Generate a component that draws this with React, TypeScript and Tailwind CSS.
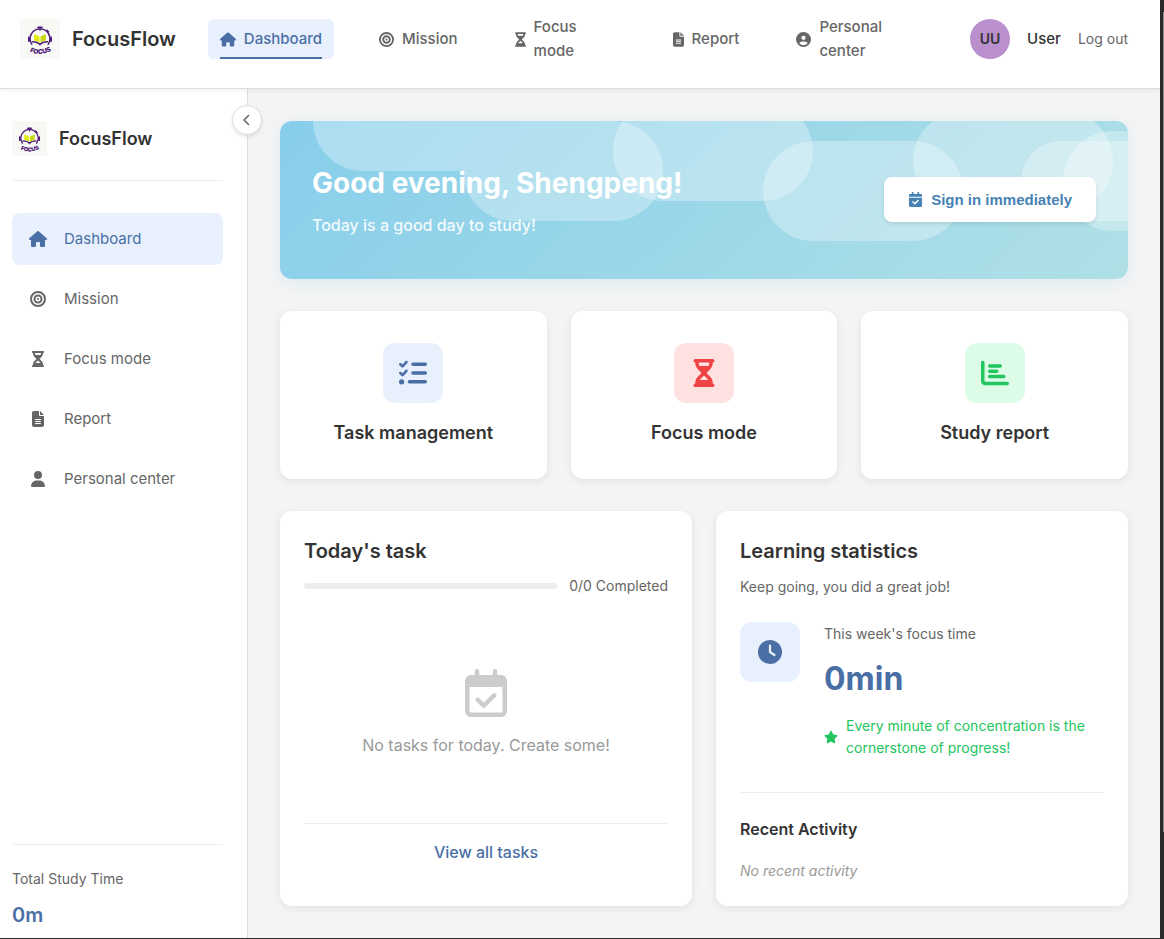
import React from "react";
import {
  FaHouse, FaBullseye, FaHourglassHalf, FaFileLines, FaUser, FaCircleUser, FaCalendarCheck,
  FaListCheck, FaChartBar, FaClock, FaStar, FaChevronLeft, FaRegCalendarCheck,
} from "react-icons/fa6";
import type { IconType } from "react-icons";

function Logo({ className, arcId }: { className: string; arcId: string }) {
  return (
    <svg viewBox="0 0 40 40" className={className} aria-hidden="true">
      <rect width="40" height="40" fill="#f8f8f4" />
      <g fill="none" stroke="#4f1b78" strokeLinecap="round">
        <path d="M18 8.3h4M20 8.5v2.6" strokeWidth="1.6" />
        <path d="M27 11.4l1.6 1.6" strokeWidth="1.6" />
        <path d="M11.8 25.4a10 10 0 1 1 16.4 0" strokeWidth="1.5" />
        <path d="M9 18.5v3.4M31 18.5v3.4" strokeWidth="2" />
        <path d="M12.5 22.8c3.2 0 5.8.8 7.5 2.8 1.7-2 4.3-2.8 7.5-2.8" strokeWidth="1.5" />
      </g>
      <path d="M14 15.6c2.5.2 4.3 1 5.5 2.4v6c-1.4-1.4-3.2-2.2-5.500-2.400z" fill="#e3ec10" />
      <path d="M26 15.6c-2.500.2-4.300 1-5.500 2.400v6c1.400-1.400 3.200-2.200 5.500-2.400z" fill="#c8d812" />
      <path id={arcId} d="M7 31Q20 39.500 34 30" fill="none" />
      <text fill="#4f1b78" fontSize="6.5" fontWeight="900" textAnchor="middle">
        <textPath href={`#${arcId}`} startOffset="50%">FOCUS</textPath>
      </text>
    </svg>
  );
}

type NavEntry = { label: string; icon: IconType; size: string; active?: boolean };

const topNav: NavEntry[] = [
  { label: "Dashboard", icon: FaHouse, size: "h-[15px] w-4", active: true },
  { label: "Mission", icon: FaBullseye, size: "h-[15px] w-[15px]" },
  { label: "Focus mode", icon: FaHourglassHalf, size: "h-[15px] w-[11px]" },
  { label: "Report", icon: FaFileLines, size: "h-[15px] w-[11px]" },
  { label: "Personal center", icon: FaCircleUser, size: "h-[15px] w-[15px]" },
];

const sideNav: NavEntry[] = [
  { label: "Dashboard", icon: FaHouse, size: "h-4 w-[18px]", active: true },
  { label: "Mission", icon: FaBullseye, size: "size-4" },
  { label: "Focus mode", icon: FaHourglassHalf, size: "size-4" },
  { label: "Report", icon: FaFileLines, size: "size-4" },
  { label: "Personal center", icon: FaUser, size: "size-4" },
];

function Header() {
  return (
    <header className="relative z-10 flex items-center border-b border-[#dddddd] bg-white pt-[7px] pr-8 pb-[17px] pl-5 shadow-[0_2px_4px_rgba(0,0,0,0.05)]">
      <a href="#" className="flex shrink-0 items-center gap-3 text-xl font-semibold text-[#333333]">
        <Logo className="size-10" arcId="header-logo-arc" />
        FocusFlow
      </a>
      <nav className="ml-8 flex items-center gap-[33px] text-[15px] leading-6 font-medium">
        {topNav.map(({ label, icon: Icon, size, active }) => (
          <a
            key={label}
            href="#"
            className={
              active
                ? "relative flex items-center gap-2 rounded-md bg-[#e8f0fe] px-3 py-2 text-[#4a6fa5] after:absolute after:inset-x-3 after:bottom-0 after:h-0.5 after:bg-[#4a6fa5]"
                : "flex items-center gap-2 px-3 py-2 text-[#666666]"
            }
          >
            <Icon className={`${size} shrink-0`} />
            <span className="max-w-[82px]">{label}</span>
          </a>
        ))}
      </nav>
      <div className="ml-auto flex shrink-0 items-center gap-[17px]">
        <div className="flex size-10 items-center justify-center rounded-full bg-[#ba8fce] text-sm font-semibold text-[#333333]">UU</div>
        <span className="text-[15px] font-medium text-[#333333]">User</span>
        <button type="button" className="text-sm text-[#666666]">Log out</button>
      </div>
    </header>
  );
}

function Sidebar() {
  return (
    <aside className="relative flex w-[248px] shrink-0 flex-col border-r border-[#dddddd] bg-white pt-8 pr-6 pb-[7px] pl-3">
      <button
        type="button"
        aria-label="Collapse sidebar"
        className="absolute top-4 -right-[15px] flex size-[30px] items-center justify-center rounded-full border border-[#dddddd] bg-white text-[#666666] shadow-[0_2px_4px_rgba(0,0,0,0.1)]"
      >
        <FaChevronLeft className="size-3" />
      </button>
      <div className="flex items-center gap-3 border-b border-[#eeeeee] pb-6 text-lg font-semibold text-[#333333]">
        <Logo className="size-[35px]" arcId="sidebar-logo-arc" />
        FocusFlow
      </div>
      <nav className="mt-8 flex flex-col gap-2 text-[15px] leading-5">
        {sideNav.map(({ label, icon: Icon, size, active }) => (
          <a
            key={label}
            href="#"
            className={
              active
                ? "flex items-center gap-4 rounded-lg bg-[#e8f0fe] p-4 text-[#4a6fa5]"
                : "flex items-center gap-4 rounded-lg p-4 text-[#666666]"
            }
          >
            <span className="flex w-5 justify-center"><Icon className={size} /></span>
            {label}
          </a>
        ))}
      </nav>
      <div className="mt-auto border-t border-[#eeeeee] pt-6">
        <p className="text-sm text-[#666666]">Total Study Time</p>
        <p className="mt-2.5 text-xl leading-8 font-semibold text-[#4a6fa5]">0m</p>
      </div>
    </aside>
  );
}

function Banner() {
  return (
    <section className="relative flex items-center justify-between overflow-hidden rounded-xl bg-[linear-gradient(135deg,#87ceeb,#b0e0e6)] px-8 pt-[39px] pb-[41px] shadow-[0_4px_16px_rgba(135,206,235,0.2)]">
      <div className="absolute -top-[50px] left-[33px] h-[100px] w-[200px] rounded-full bg-white/30 shadow-[150px_50px_rgba(255,255,255,0.3),300px_30px_rgba(255,255,255,0.3),450px_70px_rgba(255,255,255,0.3),600px_40px_rgba(255,255,255,0.3),750px_60px_rgba(255,255,255,0.3)]" />
      <div className="absolute top-5 -right-[43px] h-20 w-[150px] rounded-full bg-white/30" />
      <div className="relative text-white">
        <h1 className="text-[28px] leading-[46px] font-bold">Good evening, Shengpeng!</h1>
        <p className="mt-1.5 text-base leading-[26px] font-medium opacity-90">Today is a good day to study!</p>
      </div>
      <button
        type="button"
        className="relative flex items-center gap-2 rounded-lg bg-white px-6 py-3 font-['Liberation_Sans',Arial,sans-serif] text-[15px] leading-[21px] font-bold text-[#4682b4] shadow-[0_2px_4px_rgba(0,0,0,0.1)]"
      >
        <FaCalendarCheck className="size-[15px]" />
        Sign in immediately
      </button>
    </section>
  );
}

const card = "rounded-xl bg-white shadow-[0_2px_8px_rgba(0,0,0,0.08)]";

const shortcuts = [
  { label: "Task management", icon: FaListCheck, tone: "bg-[#e8f0fe] text-[#4a6fa5]" },
  { label: "Focus mode", icon: FaHourglassHalf, tone: "bg-[#fee2e2] text-[#ef4444]" },
  { label: "Study report", icon: FaChartBar, tone: "bg-[#dcfce7] text-[#22c55e]" },
];

function TodayCard() {
  return (
    <section className={`${card} flex flex-col p-6`}>
      <h2 className="text-xl leading-8 font-semibold">Today's task</h2>
      <div className="mt-2 flex items-center gap-3">
        <div className="h-1.5 flex-1 rounded-full bg-[#eeeeee]" role="progressbar" aria-label="Tasks completed" aria-valuenow={0} />
        <span className="text-sm leading-[22px] text-[#666666]">0/0 Completed</span>
      </div>
      <div className="flex flex-1 flex-col items-center justify-center gap-4 pt-[5px] text-[#999999]">
        <FaRegCalendarCheck className="size-12 text-[#cccccc]" />
        <p className="text-base leading-6">No tasks for today. Create some!</p>
      </div>
      <div className="border-t border-[#eeeeee] pt-4 pb-[18px] text-center">
        <a href="#" className="text-base leading-6 font-medium text-[#4a6fa5]">View all tasks</a>
      </div>
    </section>
  );
}

function StatsCard() {
  return (
    <section className={`${card} p-6`}>
      <h2 className="text-xl leading-8 font-semibold">Learning statistics</h2>
      <p className="mt-2 text-sm leading-6 text-[#666666]">Keep going, you did a great job!</p>
      <div className="mt-[23px] flex items-start gap-6 border-b border-[#eeeeee] pb-[33px]">
        <div className="flex size-15 shrink-0 items-center justify-center rounded-xl bg-[#e8f0fe] text-[#4a6fa5]">
          <FaClock className="size-6" />
        </div>
        <div>
          <p className="text-sm leading-6 text-[#666666]">This week's focus time</p>
          <p className="mt-2 text-[32px] leading-[50px] font-bold text-[#4a6fa5]">0min</p>
          <p className="mt-[11px] flex items-center gap-2 text-sm leading-[22px] text-[#22c55e]">
            <FaStar className="size-[14px] shrink-0" />
            <span>Every minute of concentration is the cornerstone of progress!</span>
          </p>
        </div>
      </div>
      <h3 className="mt-6 text-base leading-6 font-semibold">Recent Activity</h3>
      <p className="mt-[19px] text-sm leading-[22px] text-[#999999] italic">No recent activity</p>
    </section>
  );
}

export default function App() {
  return (
    <div className="flex min-h-screen border-b border-[#2b2b2b] bg-[#f4f4f4] font-['Inter',sans-serif] text-[#333333]">
      <div className="flex min-w-0 flex-1 flex-col">
        <Header />
        <div className="flex flex-1">
          <Sidebar />
          <main className="flex min-w-0 flex-1 flex-col gap-8 p-8">
            <Banner />
            <div className="grid grid-cols-3 gap-6">
              {shortcuts.map(({ label, icon: Icon, tone }) => (
                <a key={label} href="#" className={`${card} flex flex-col items-center gap-4 py-8`}>
                  <span className={`flex size-15 items-center justify-center rounded-xl ${tone}`}>
                    <Icon className="size-7" />
                  </span>
                  <span className="text-lg leading-7 font-semibold">{label}</span>
                </a>
              ))}
            </div>
            <div className="grid flex-1 grid-cols-2 gap-6">
              <TodayCard />
              <StatsCard />
            </div>
          </main>
        </div>
      </div>
      <div className="flex w-1 shrink-0 flex-col items-end bg-[#2b2b2b] pt-3">
        <div className="w-px flex-[820] bg-[#8a8a8a]" />
        <div className="flex-[106]" />
      </div>
    </div>
  );
}
